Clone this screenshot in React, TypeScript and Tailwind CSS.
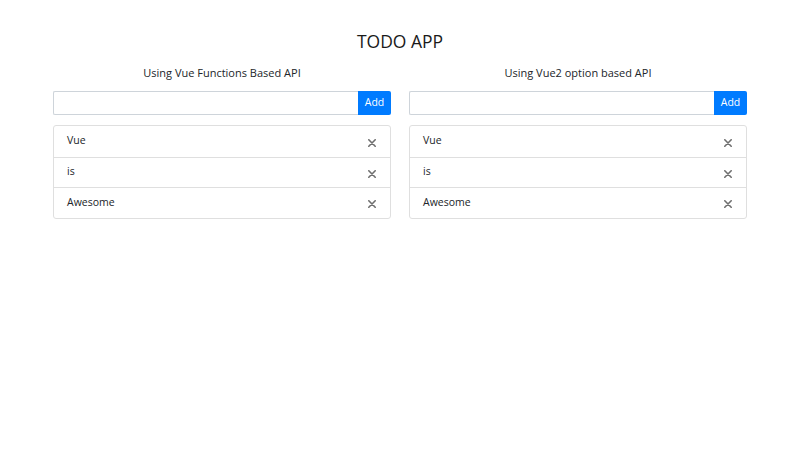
const items = ['Vue', 'is', 'Awesome'];

function TodoList({ title }: { title: string }) {
  return (
    <div className="flex flex-col">
      <h2 className="text-center text-[11px] leading-[14px] text-[#212529] mt-[2px]">{title}</h2>
      <div className="flex mt-[11px] h-[24px]">
        <input
          type="text"
          className="flex-1 min-w-0 border border-[#ced4da] border-r-0 rounded-l-[2px] outline-none px-2 text-[10px]"
        />
        <button className="w-[33px] bg-[#007bff] text-white text-[10.5px] rounded-r-[2px]">Add</button>
      </div>
      <ul className="mt-[10px] border border-[#dfdfdf] rounded-[3px]">
        {items.map((item, i) => (
          <li
            key={item}
            className={`flex items-center justify-between h-[30.5px] pl-[13px] pr-[14px] ${i > 0 ? 'border-t border-[#dfdfdf]' : ''}`}
          >
            <span className="text-[10.5px] text-[#212529]">{item}</span>
            <svg width="8" height="8" viewBox="0 0 8 8" className="mt-[3px]">
              <path d="M0.8 0.8L7.2 7.2M7.2 0.8L0.8 7.2" stroke="#6f6f6f" strokeWidth="1.6" strokeLinecap="round" />
            </svg>
          </li>
        ))}
      </ul>
    </div>
  );
}

export default function App() {
  return (
    <div className="w-[800px] h-[450px] bg-white" style={{ fontFamily: '"Open Sans", "Noto Sans", sans-serif' }}>
      <h1 className="text-center text-[17.5px] leading-[22px] text-[#1a1a1a] pt-[30px]">TODO APP</h1>
      <div className="grid grid-cols-2 gap-[18px] mx-[53px] mt-[12px]">
        <TodoList title="Using Vue Functions Based API" />
        <TodoList title="Using Vue2 option based API" />
      </div>
    </div>
  );
}
